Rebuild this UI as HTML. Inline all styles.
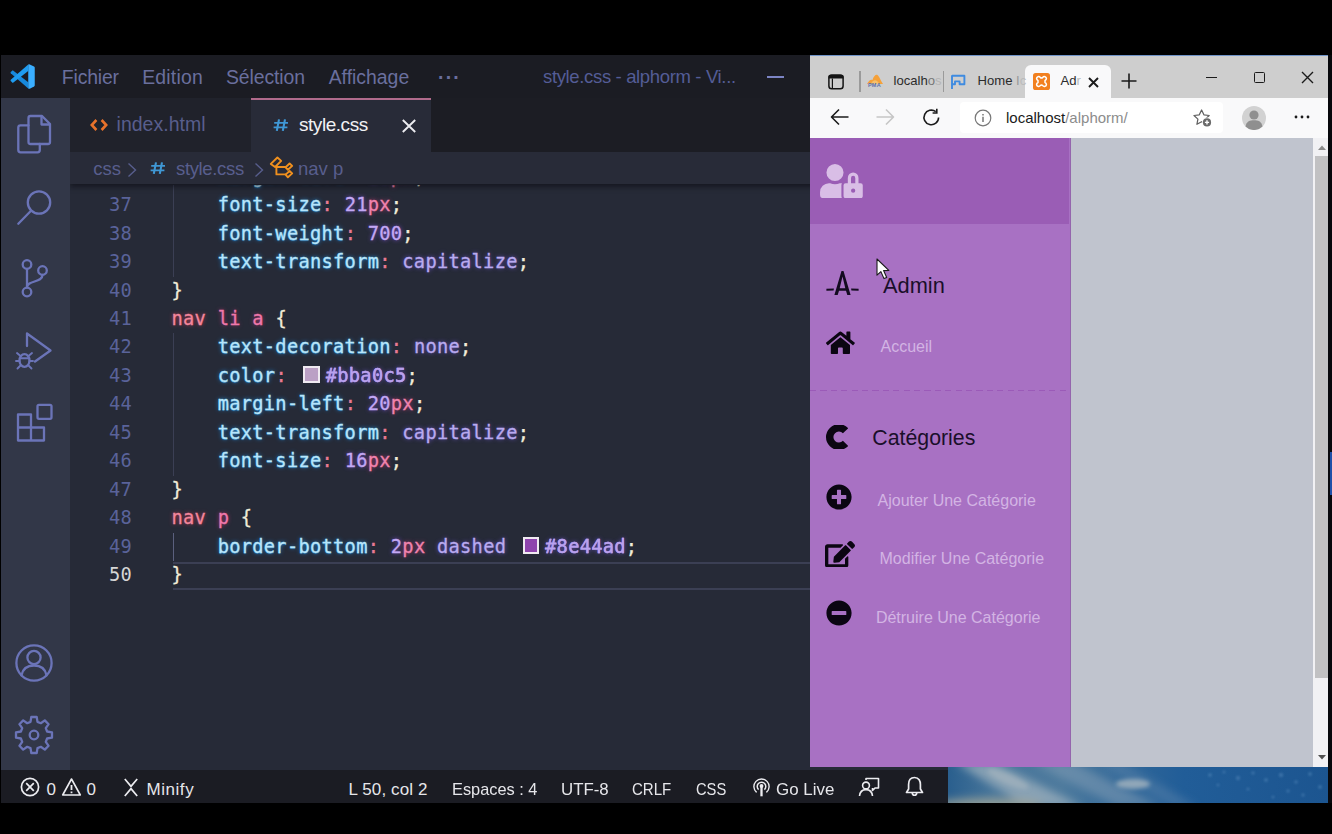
<!DOCTYPE html>
<html lang="fr">
<head>
<meta charset="utf-8">
<title>style.css - alphorm - Visual Studio Code</title>
<style>
*{box-sizing:border-box;margin:0;padding:0}
html,body{width:1332px;height:834px;overflow:hidden;background:#000}
body{position:relative;font-family:"Liberation Sans",sans-serif;}
.abs{position:absolute}
.t{position:absolute;white-space:pre;line-height:1}
/* ---------- VS Code ---------- */
#vs{position:absolute;left:1px;top:55px;width:947px;height:748px;background:#262a37;overflow:hidden}
#title{left:0;top:0;width:947px;height:43px;background:#1b1c23}
#tabs{left:69px;top:43px;width:878px;height:54px;background:#1c1d24}
#tab1{left:0;top:0;width:181px;height:54px;background:#20222b}
#tab2{left:181px;top:0;width:180px;height:54px;background:#282b38;border-top:2px solid #b06a8b}
#crumbs{left:69px;top:97px;width:878px;height:32px;background:#282b38;box-shadow:0 3px 5px rgba(10,10,16,.55);z-index:5;clip-path:inset(0 0 -12px 0)}
#act{left:0;top:43px;width:68.5px;height:672px;background:#323748}
#status{left:0;top:715px;width:947px;height:33px;background:#1b1c23;z-index:6}
.menu{color:#6a6f9e;font-size:19.4px}
.crumb{color:#585e8d;font-size:18.5px}
.st{color:#e6e6ea;font-size:17px;transform-origin:0 50%}
/* code */
#code{left:69px;top:130px;width:878px;height:585px;overflow:hidden}
.ln{position:absolute;left:0;width:62px;text-align:right;color:#5a639a;font-family:"DejaVu Sans Mono","Liberation Mono",monospace;font-size:18.7px;letter-spacing:.289px;line-height:28.45px;height:28.45px;white-space:pre}
.cl{position:absolute;left:101.5px;color:#efe9d6;-webkit-text-stroke:.3px currentColor;font-family:"DejaVu Sans Mono","Liberation Mono",monospace;font-size:18.7px;letter-spacing:.289px;line-height:28.45px;height:28.45px;white-space:pre}
.p{color:#b6e5fb;text-shadow:0 0 4px #1f86d4,0 1px 1px rgba(40,140,220,.6)}
.c{color:#e97a93}
.n{color:#c3a8f4;text-shadow:0 0 4px #7a4fd0}
.u{color:#f083ad;text-shadow:0 0 4px #b03a74}
.v{color:#b9aaf0;text-shadow:0 0 4px #6a55c8}
.s1{color:#f4869b;text-shadow:0 0 4px #b83a55}
.s2{color:#ef78ab;text-shadow:0 0 4px #a8356e}
.b{color:#f1ecd9}
.hx{color:#b9a2ee;text-shadow:0 0 4px #6a55c8;background:linear-gradient(90deg,#a99af0,#d9a0e0);-webkit-background-clip:text;background-clip:text}
.sw{display:inline-block;width:16.8px;height:16.8px;margin:0 5.7px 0 4.8px;border:2px solid #efeaf1;vertical-align:-1px}
/* ---------- Browser ---------- */
#br{position:absolute;left:810px;top:55px;width:518px;height:712px;background:#c0c4ce;overflow:hidden;z-index:10}
#strip{left:0;top:0;width:518px;height:43px;background:#cecece;border-top:1px solid #6f93c8}
#tool{left:0;top:43px;width:518px;height:40px;background:#f9f9fa}
#atab{left:215px;top:9px;width:86px;height:34px;background:#f9f9fa;border-radius:6px 6px 0 0}
#addr{left:150px;top:47px;width:263px;height:31px;background:#fff;border-radius:4px}
#side{left:0;top:83px;width:260.5px;height:629px;background:#a871c3;border-right:1.5px solid #9465ad}
#shead{left:0;top:0;width:259px;height:85.5px;background:#9a5db5}
.h{color:#1a0f2a;font-size:21px}
.a{color:#d3b4e4;font-size:16px}
.bt{color:#2b2b2b;font-size:13.1px}
</style>
</head>
<body>

<!-- ================= VS CODE ================= -->
<div id="vs">
  <div id="title" class="abs">
    <svg class="abs" style="left:9px;top:9px" width="25" height="25" viewBox="0 0 100 100">
      <path d="M11 24.5 L3 32 Q1 34.5 3 37 L73 98 V72.5 Z" fill="#1789dc"/>
      <path d="M11 75.5 L3 68 Q1 65.500 3 63 L73 2 V27.500 Z" fill="#1f9cf0"/>
      <path d="M73 2 Q76 0 79 1.500 L96 10 Q99 11.500 99 15 V85 Q99 88.500 96 90 L79 98.500 Q76 100 73 98 Z" fill="#3aaeff"/>
    </svg>
    <span class="t menu" style="left:60.8px;top:13px;letter-spacing:-.15px">Fichier</span>
    <span class="t menu" style="left:141.2px;top:13px;letter-spacing:.2px">Edition</span>
    <span class="t menu" style="left:225px;top:13px;letter-spacing:-.1px">Sélection</span>
    <span class="t menu" style="left:327.7px;top:13px">Affichage</span>
    <span class="t menu" style="left:437px;top:12.6px;letter-spacing:1.2px;font-weight:bold">···</span>
    <span class="t menu" style="left:542px;top:13px;font-size:18.5px;letter-spacing:-.35px;color:#545c96">style.css - alphorm - Vi...</span>
    <div class="abs" style="left:766px;top:21px;width:17px;height:2px;background:#7c84c4"></div>
  </div>
  <div id="act" class="abs">
    <svg class="abs" style="left:0;top:0" width="69" height="672" viewBox="1 98 69 672" fill="none" stroke="#6b74b8" stroke-width="2.3" stroke-linejoin="round" stroke-linecap="round">
      <!-- files -->
      <path d="M30.5 116 H42 L50 124 V142 a2 2 0 0 1 -2 2 H30.5 a2 2 0 0 1 -2 -2 V118 a2 2 0 0 1 2 -2 Z"/>
      <path d="M41.5 116.5 V124.5 H49.5"/>
      <path d="M28.5 125.3 H20.5 a2.2 2.2 0 0 0 -2.2 2.2 V150.1 a2.2 2.2 0 0 0 2.2 2.2 H37.6 a2.2 2.2 0 0 0 2.2 -2.2 V144"/>
      <!-- search -->
      <circle cx="39" cy="202.5" r="11.2"/>
      <path d="M31 210.8 L18.3 223.8"/>
      <!-- scm -->
      <circle cx="27" cy="264.5" r="4.3"/><circle cx="42.5" cy="270.5" r="4.3"/><circle cx="27" cy="292" r="4.3"/>
      <path d="M27 269 V287.5 M42.5 275 C42.5 283 27 280 27 287.5"/>
      <!-- debug -->
      <path d="M27 346 V333.5 L50.5 350.5 L35 361.5"/>
      <ellipse cx="24.5" cy="360.5" rx="5" ry="6.3"/>
      <path d="M20.5 356 L17 353 M28.5 356 L32 353 M19.5 361 H16 M29.5 361 H33 M20.5 365.5 L17.5 368.5 M28.5 365.5 L31.5 368.5 M20.5 358.3 H28.5" stroke-width="1.9"/>
      <!-- extensions -->
      <path d="M18 414.5 H31 V427.5 H44 V440.5 H18 Z M31 427.5 V440.5 M18 427.5 H31"/>
      <rect x="37.5" y="404.8" width="14" height="14" rx="1.5"/>
      <!-- account -->
      <circle cx="34" cy="663" r="17.6"/>
      <circle cx="34" cy="657.5" r="6.6"/>
      <path d="M21.5 675.3 C23 667.5 29 665.5 34 665.5 C39 665.5 45 667.5 46.5 675.3"/>
      <!-- gear -->
      <path d="M30.5 721.9 L31.3 717.0 L36.7 717.0 L37.5 721.9 L40.8 723.2 L44.8 720.4 L48.6 724.2 L45.8 728.2 L47.1 731.5 L52.0 732.3 L52.0 737.7 L47.1 738.5 L45.8 741.8 L48.6 745.8 L44.8 749.6 L40.8 746.8 L37.5 748.1 L36.7 753.0 L31.3 753.0 L30.5 748.1 L27.2 746.8 L23.2 749.6 L19.4 745.8 L22.2 741.8 L20.9 738.5 L16.0 737.7 L16.0 732.3 L20.9 731.5 L22.2 728.2 L19.4 724.2 L23.2 720.4 L27.2 723.2 Z"/>
      <circle cx="34" cy="735" r="4.3"/>
    </svg>
  </div>
  <div id="tabs" class="abs">
    <div id="tab1" class="abs">
      <svg class="abs" style="left:19px;top:19px" width="20" height="16" viewBox="0 0 20 16" fill="none" stroke="#e9722b" stroke-width="2.6"><path d="M7.4 3 L2.8 8 L7.4 13 M12.6 3 L17.2 8 L12.600 13"/></svg>
      <span class="t" style="left:46.6px;top:17.3px;font-size:19.5px;color:#585e8d">index.html</span>
    </div>
    <div id="tab2" class="abs">
      <svg class="abs" style="left:21.5px;top:18.5px" width="16" height="12.3" viewBox="0 0 16 14" preserveAspectRatio="none" fill="none" stroke="#3f97d4" stroke-width="2.1"><path d="M6 0.5 L3.8 13.5 M12 0.5 L9.8 13.5 M1.2 4.5 H15 M0.6 9.5 H14.4"/></svg>
      <span class="t" style="left:48px;top:15.2px;font-size:19px;letter-spacing:-.46px;color:#f2f2f4">style.css</span>
      <svg class="abs" style="left:150px;top:18.5px" width="16" height="14" viewBox="0 0 16 14" fill="none" stroke="#ececf0" stroke-width="1.9"><path d="M1.8 1 L14.2 13 M14.2 1 L1.8 13"/></svg>
    </div>
  </div>
  <div id="code" class="abs">
    <div class="abs" style="left:102.5px;top:376.99px;width:800px;height:28px;border-top:2px solid #3b3f54;border-bottom:2px solid #3b3f54"></div>
    <div class="abs" style="left:102.6px;top:-22.21px;width:1px;height:113.80px;background:#3b3f54"></div>
    <div class="abs" style="left:102.6px;top:148.49px;width:1px;height:142.25px;background:#3b3f54"></div>
    <div class="abs" style="left:102.6px;top:347.64px;width:1px;height:28.45px;background:#5b607e"></div>
    <div class="ln" style="top:-22.21px">36</div><div class="cl" style="top:-22.21px">    <span class="p">margin-left</span><span class="c">:</span> <span class="n">10</span><span class="u">px</span><span class="b">;</span></div>
    <div class="ln" style="top:6.24px">37</div><div class="cl" style="top:6.24px">    <span class="p">font-size</span><span class="c">:</span> <span class="n">21</span><span class="u">px</span><span class="b">;</span></div>
    <div class="ln" style="top:34.69px">38</div><div class="cl" style="top:34.69px">    <span class="p">font-weight</span><span class="c">:</span> <span class="n">700</span><span class="b">;</span></div>
    <div class="ln" style="top:63.14px">39</div><div class="cl" style="top:63.14px">    <span class="p">text-transform</span><span class="c">:</span> <span class="v">capitalize</span><span class="b">;</span></div>
    <div class="ln" style="top:91.59px">40</div><div class="cl" style="top:91.59px"><span class="b">}</span></div>
    <div class="ln" style="top:120.04px">41</div><div class="cl" style="top:120.04px"><span class="s1">nav</span> <span class="s2">li</span> <span class="s2">a</span> <span class="b">{</span></div>
    <div class="ln" style="top:148.49px">42</div><div class="cl" style="top:148.49px">    <span class="p">text-decoration</span><span class="c">:</span> <span class="v">none</span><span class="b">;</span></div>
    <div class="ln" style="top:176.94px">43</div><div class="cl" style="top:176.94px">    <span class="p">color</span><span class="c">:</span> <span class="sw" style="background:#bba0c5"></span><span class="hx">#bba0c5</span><span class="b">;</span></div>
    <div class="ln" style="top:205.39px">44</div><div class="cl" style="top:205.39px">    <span class="p">margin-left</span><span class="c">:</span> <span class="n">20</span><span class="u">px</span><span class="b">;</span></div>
    <div class="ln" style="top:233.84px">45</div><div class="cl" style="top:233.84px">    <span class="p">text-transform</span><span class="c">:</span> <span class="v">capitalize</span><span class="b">;</span></div>
    <div class="ln" style="top:262.29px">46</div><div class="cl" style="top:262.29px">    <span class="p">font-size</span><span class="c">:</span> <span class="n">16</span><span class="u">px</span><span class="b">;</span></div>
    <div class="ln" style="top:290.74px">47</div><div class="cl" style="top:290.74px"><span class="b">}</span></div>
    <div class="ln" style="top:319.19px">48</div><div class="cl" style="top:319.19px"><span class="s1">nav</span> <span class="s2">p</span> <span class="b">{</span></div>
    <div class="ln" style="top:347.64px">49</div><div class="cl" style="top:347.64px">    <span class="p">border-bottom</span><span class="c">:</span> <span class="n">2</span><span class="u">px</span> <span class="v">dashed</span> <span class="sw" style="background:#8e44ad"></span><span class="hx">#8e44ad</span><span class="b">;</span></div>
    <div class="ln" style="top:376.09px;color:#d6d6d6">50</div><div class="cl" style="top:376.09px"><span class="b">}</span></div>
  </div>
  <div id="crumbs" class="abs">
    <span class="t crumb" style="left:23.3px;top:7.9px">css</span>
    <svg class="abs" style="left:56px;top:9px" width="12" height="18" viewBox="0 0 12 18" fill="none" stroke="#585e8d" stroke-width="1.4"><path d="M2.5 2.5 L9.5 9 L2.5 15.5"/></svg>
    <svg class="abs" style="left:79.5px;top:9.5px" width="16" height="12.3" viewBox="0 0 16 14" preserveAspectRatio="none" fill="none" stroke="#3f97d4" stroke-width="2.1"><path d="M6 0.5 L3.8 13.5 M12 0.5 L9.8 13.5 M1.2 4.5 H15 M0.6 9.5 H14.4"/></svg>
    <span class="t crumb" style="left:106px;top:7.9px;letter-spacing:-.35px">style.css</span>
    <svg class="abs" style="left:183px;top:9px" width="12" height="18" viewBox="0 0 12 18" fill="none" stroke="#585e8d" stroke-width="1.4"><path d="M2.5 2.5 L9.5 9 L2.5 15.5"/></svg>
    <svg class="abs" style="left:199px;top:4px" width="26" height="24" viewBox="0 0 26 24" fill="none" stroke="#f0901e" stroke-width="1.9" stroke-linejoin="round">
      <path d="M1.8 7.900 L8.400 1.500 L12.200 4.900 L6.100 11 Z"/>
      <path d="M16.600 11.300 L20.600 7.500 L23.200 9.900 L18.900 13.800 Z"/>
      <path d="M16.600 18.600 L20.600 15 L23.200 17.400 L18.900 21.300 Z"/>
      <path d="M7.400 10 V18.400 H17 M7.400 11 H17"/>
    </svg>
    <span class="t crumb" style="left:228px;top:7.9px">nav p</span>
  </div>
  <div id="status" class="abs">
    <svg class="abs" style="left:19px;top:7px" width="20" height="20" viewBox="0 0 20 20" fill="none" stroke="#ececf0" stroke-width="1.7"><circle cx="10" cy="10" r="8.6"/><path d="M6.2 6.2 L13.8 13.8 M13.8 6.2 L6.2 13.8"/></svg>
    <span class="t st" style="left:45.5px;top:10.7px">0</span>
    <svg class="abs" style="left:60px;top:7px" width="21" height="20" viewBox="0 0 21 20" fill="none" stroke="#ececf0" stroke-width="1.6" stroke-linejoin="round"><path d="M10.5 2 L19.3 18 H1.7 Z"/><path d="M10.5 8 V13 M10.5 14.6 V16.2" stroke-width="1.8"/></svg>
    <span class="t st" style="left:85.5px;top:10.7px">0</span>
    <svg class="abs" style="left:122px;top:8px" width="16" height="19" viewBox="0 0 16 19" fill="none" stroke="#ececf0" stroke-width="1.7"><path d="M1.8 1 L8 8.4 L14.2 1 M1.8 18 L8 10.6 L14.2 18"/></svg>
    <span class="t st" style="left:145.5px;top:10.7px;letter-spacing:.55px">Minify</span>
    <span class="t st" style="left:347.5px;top:10.7px;letter-spacing:.12px">L 50, col 2</span>
    <span class="t st" style="left:450.5px;top:10.7px;transform:scaleX(.962)">Espaces : 4</span>
    <span class="t st" style="left:559.8px;top:10.7px;transform:scaleX(.99)">UTF-8</span>
    <span class="t st" style="left:631.3px;top:10.7px;transform:scaleX(.885)">CRLF</span>
    <span class="t st" style="left:694.5px;top:10.7px;transform:scaleX(.865)">CSS</span>
    <svg class="abs" style="left:750.5px;top:7px" width="19" height="20" viewBox="0 0 19 20" fill="none" stroke="#ececf0" stroke-width="1.5"><circle cx="9.5" cy="9" r="1.9" fill="#ececf0" stroke="none"/><path d="M6.6 12.6 A4.3 4.3 0 1 1 12.4 12.6"/><path d="M4.6 15.400 A7.600 7.600 0 1 1 14.400 15.400" stroke-width="1.4"/><path d="M9.500 10 V19.300" stroke-width="2.300"/></svg>
    <span class="t st" style="left:774.5px;top:10.7px;transform:scaleX(.995)">Go Live</span>
    <svg class="abs" style="left:857px;top:7px" width="22" height="20" viewBox="0 0 22 20" fill="none" stroke="#ececf0" stroke-width="1.6" stroke-linejoin="round"><path d="M8 3 V1.5 H20.5 V11 H17 L14.5 13.5 V11"/><circle cx="8" cy="8.5" r="3.4"/><path d="M1.5 19 C2 14 5 12.6 8 12.6 C11 12.6 14 14 14.5 19"/></svg>
    <svg class="abs" style="left:904px;top:6px" width="19" height="22" viewBox="0 0 19 22" fill="none" stroke="#ececf0" stroke-width="1.7" stroke-linejoin="round"><path d="M9.5 1.5 C5 1.5 3.6 5 3.6 8.5 V13 L1.5 16.5 H17.5 L15.4 13 V8.5 C15.4 5 14 1.5 9.5 1.5 Z"/><path d="M7.3 17 C7.3 20 11.7 20 11.7 17"/></svg>
  </div>
</div>

<!-- ================= BROWSER ================= -->
<div id="br">
  <div id="strip" class="abs"><div id="atab" class="abs"></div>
    <!-- tab actions icon -->
    <svg class="abs" style="left:17.5px;top:18px" width="16" height="16" viewBox="0 0 16 16" fill="none" stroke="#141414" stroke-width="1.5"><rect x="0.9" y="0.9" width="14.2" height="13.8" rx="2.8"/><path d="M1.5 0.9 H14.5 a1.5 1.5 0 0 1 1 1.5 V4.6 H0.5 V2.4 a1.5 1.5 0 0 1 1 -1.5 Z" fill="#141414" stroke="none"/><path d="M4.4 4.6 V14.5" stroke-width="1.2"/></svg>
    <div class="abs" style="left:49px;top:15px;width:1.5px;height:21px;background:#9a9a9a"></div>
    <!-- pma icon -->
    <svg class="abs" style="left:56px;top:17px" width="18" height="17" viewBox="0 0 18 17"><path d="M1 11 C3 7 5 6 6.5 7 C7.5 3 10 1 11.5 2 C13 3 14 6 17 11 Z" fill="#f5a13a"/><path d="M5 11 C6 8 9 6 11 8 C12 9 13 10 14 11 Z" fill="#f7c06a"/></svg>
    <span class="t" style="left:58px;top:27px;font-size:5.5px;font-weight:bold;color:#5b6fa8;letter-spacing:.2px">PMA</span>
    <span class="t bt" style="left:83.5px;top:18.2px">localh<span style="color:#777">o</span><span style="color:#b5b5b5">s</span></span>
    <div class="abs" style="left:132.5px;top:15px;width:1.5px;height:21px;background:#9a9a9a"></div>
    <!-- flag icon -->
    <svg class="abs" style="left:140px;top:18px" width="17" height="16" viewBox="0 0 17 16" fill="none" stroke="#3f8be0" stroke-width="1.9" stroke-linejoin="round"><path d="M2 15 V1.2"/><path d="M2 1.8 H14.4 V10.2 H9.6 V7.4 H5 V10.2 H2" /></svg>
    <span class="t bt" style="left:167.5px;top:18.2px">Home <span style="color:#999">I</span><span style="color:#bbb">c</span></span>
    <!-- xampp icon -->
    <svg class="abs" style="left:223px;top:17px" width="17" height="17" viewBox="0 0 17 17"><rect x="0" y="0" width="17" height="17" rx="2.6" fill="#f2801f"/><path d="M3.6 5.6 a2 2 0 0 1 3.6 -1.2 q1.3 1.2 2.6 0 a2 2 0 0 1 3.6 1.2 q-0.2 1.4 -1.4 1.9 v2 q1.2 0.5 1.4 1.9 a2 2 0 0 1 -3.6 1.2 q-1.3 -1.2 -2.6 0 a2 2 0 0 1 -3.6 -1.2 q0.2 -1.4 1.4 -1.9 v-2 q-1.2 -0.5 -1.4 -1.9 Z" fill="none" stroke="#fff" stroke-width="1.5" stroke-linejoin="round"/></svg>
    <span class="t bt" style="left:250.5px;top:18.2px">Ad<span style="color:#bbb">r</span></span>
    <svg class="abs" style="left:278px;top:21px" width="11" height="11" viewBox="0 0 11 11" fill="none" stroke="#1b1b1b" stroke-width="1.9"><path d="M1 1 L10 10 M10 1 L1 10"/></svg>
    <svg class="abs" style="left:311px;top:17px" width="16" height="16" viewBox="0 0 16 16" fill="none" stroke="#1b1b1b" stroke-width="1.6"><path d="M8 0.5 V15.5 M0.5 8 H15.5"/></svg>
    <div class="abs" style="left:396px;top:20.5px;width:11px;height:1.5px;background:#1b1b1b"></div>
    <div class="abs" style="left:444px;top:15.5px;width:11px;height:11px;border:1.5px solid #1b1b1b;border-radius:1.5px"></div>
    <svg class="abs" style="left:491px;top:15px" width="13" height="13" viewBox="0 0 13 13" fill="none" stroke="#1b1b1b" stroke-width="1.4"><path d="M1 1 L12 12 M12 1 L1 12"/></svg>
  </div>
  <div id="tool" class="abs"></div>
  <div id="addr" class="abs"></div>
  <div class="abs" style="left:0;top:43px;width:518px;height:40px">
    <!-- back -->
    <svg class="abs" style="left:20px;top:10px" width="19" height="18" viewBox="0 0 19 18" fill="none" stroke="#1b1b1b" stroke-width="1.6" stroke-linejoin="round"><path d="M18.5 9 H1.8 M9 1.5 L1.5 9 L9 16.5"/></svg>
    <!-- forward -->
    <svg class="abs" style="left:66px;top:10px" width="19" height="18" viewBox="0 0 19 18" fill="none" stroke="#c6c6c6" stroke-width="1.6" stroke-linejoin="round"><path d="M0.5 9 H17.2 M10 1.5 L17.5 9 L10 16.5"/></svg>
    <!-- reload -->
    <svg class="abs" style="left:112px;top:10px" width="19" height="19" viewBox="0 0 19 19" fill="none" stroke="#1b1b1b" stroke-width="1.6"><path d="M16.6 9.5 A7.3 7.3 0 1 1 13.8 3.7"/><path d="M14.8 0.8 V5 H10.6"/></svg>
    <!-- info -->
    <svg class="abs" style="left:164px;top:10.5px" width="18" height="18" viewBox="0 0 18 18" fill="none" stroke="#777" stroke-width="1.2"><circle cx="9" cy="9" r="7.8"/><path d="M9 7.8 V13 M9 5 V6.4" stroke-width="1.5"/></svg>
    <span class="t" style="left:196px;top:11.5px;font-size:15px;color:#1b1b1b">localhost<span style="color:#8c8c8c">/alphorm/</span></span>
    <!-- star+ -->
    <svg class="abs" style="left:383px;top:10.5px" width="20" height="19" viewBox="0 0 20 19" fill="none" stroke="#606060" stroke-width="1.25" stroke-linejoin="round"><path d="M8.6 1 L10.9 5.8 L16.2 6.5 L12.3 10.1 L13.3 15.3 L8.6 12.7 L3.9 15.3 L4.9 10.1 L1 6.5 L6.3 5.8 Z"/><circle cx="14" cy="13.4" r="4.9" fill="#fff" stroke="none"/><circle cx="14" cy="13.4" r="4.1" fill="#6a6a6a" stroke="none"/><path d="M14 11.3 V15.5 M11.9 13.4 H16.1" stroke="#fff" stroke-width="1.4"/></svg>
    <!-- profile -->
    <svg class="abs" style="left:432px;top:7.5px" width="24" height="24" viewBox="0 0 24 24"><circle cx="12" cy="12" r="12" fill="#d2d2d2"/><circle cx="12" cy="9" r="4.6" fill="#8f8f8f"/><path d="M3.5 20.5 C4.5 15 8 14.2 12 14.2 C16 14.2 19.5 15 20.5 20.5 A12 12 0 0 1 3.5 20.5 Z" fill="#8f8f8f"/></svg>
    <svg class="abs" style="left:484px;top:17px" width="16" height="4" viewBox="0 0 16 4" fill="#1b1b1b"><circle cx="2" cy="2" r="1.4"/><circle cx="8" cy="2" r="1.4"/><circle cx="14" cy="2" r="1.4"/></svg>
  </div>
  <div id="side" class="abs"><div id="shead" class="abs"></div>
    <!-- user-lock -->
    <svg class="abs" style="left:10px;top:25.5px" width="42.8" height="34.2" viewBox="0 0 640 512" fill="#d9bee6"><path d="M224 256A128 128 0 1 0 96 128a128 128 0 0 0 128 128zm96 64a63.080 63.080 0 0 1 8.100-30.500c-4.800-.500-9.500-1.500-14.500-1.500h-16.700a174.080 174.080 0 0 1-145.800 0h-16.700A134.430 134.430 0 0 0 0 422.400V464a48 48 0 0 0 48 48h280.900a63.540 63.540 0 0 1-8.900-32zm288-32h-32v-80a80 80 0 0 0-160 0v80h-32a32 32 0 0 0-32 32v160a32 32 0 0 0 32 32h224a32 32 0 0 0 32-32V320a32 32 0 0 0-32-32zM496 432a32 32 0 1 1 32-32 32 32 0 0 1-32 32zm32-144h-64v-80a32 32 0 0 1 64 0z"/></svg>
    <!-- autoprefixer -->
    <svg class="abs" style="left:15.7px;top:133.4px" width="33" height="24" viewBox="0 0 33 24" fill="#140b20"><path d="M15.5 0 H17.5 L24.6 24 H21.3 L20 19.7 H13 L11.7 24 H8.4 Z M16.5 5.6 L13.7 17.3 H19.3 Z"/><path d="M0.4 17.7 L7.9 17.4 L7.6 19.6 L0.4 19.8 Z M32.6 17.7 L25.1 17.4 L25.4 19.6 L32.6 19.8 Z"/></svg>
    <span class="t h" style="left:73px;top:136.6px;font-size:21.8px">Admin</span>
    <!-- home -->
    <svg class="abs" style="left:16px;top:191.7px" width="28.8" height="25.6" viewBox="0 0 576 512" fill="#0b0612"><path d="M280.37 148.26L96 300.11V464a16 16 0 0 0 16 16l112.06-.29a16 16 0 0 0 15.920-16V368a16 16 0 0 1 16-16h64a16 16 0 0 1 16 16v95.640a16 16 0 0 0 16 16.050L464 480a16 16 0 0 0 16-16V300L295.670 148.260a12.190 12.190 0 0 0-15.300 0zM571.600 251.470L488 182.560V44.050a12 12 0 0 0-12-12h-56a12 12 0 0 0-12 12v72.610L318.470 43a48 48 0 0 0-61 0L4.340 251.470a12 12 0 0 0-1.600 16.900l25.500 31A12 12 0 0 0 45.150 301l235.220-193.740a12.190 12.190 0 0 1 15.300 0L530.900 301a12 12 0 0 0 16.900-1.600l25.500-31a12 12 0 0 0-1.700-16.930z"/></svg>
    <span class="t a" style="left:70.5px;top:201.3px">Accueil</span>
    <div class="abs" style="left:0;top:251.6px;width:260px;height:1.8px;background:repeating-linear-gradient(90deg,rgba(142,68,173,.5) 0,rgba(142,68,173,.5) 6.2px,transparent 6.2px,transparent 10.4px)"></div>
    <!-- cuttlefish C -->
    <svg class="abs" style="left:15.4px;top:286.9px" width="22.6" height="24.2" viewBox="0 0 22.6 24.2" fill="none" stroke="#0b0612" stroke-width="7.4"><path d="M20.6 5.8 A9.2 9.2 0 1 0 20.6 18.4"/></svg>
    <span class="t h" style="left:62.3px;top:290.4px;font-size:21.3px">Catégories</span>
    <!-- plus-circle -->
    <svg class="abs" style="left:15.8px;top:345.5px" width="26" height="26" viewBox="0 0 512 512" fill="#0b0612"><path d="M256 8C119 8 8 119 8 256s111 248 248 248 248-111 248-248S393 8 256 8zm144 276c0 6.600-5.400 12-12 12h-92v92c0 6.600-5.400 12-12 12h-56c-6.600 0-12-5.400-12-12v-92h-92c-6.600 0-12-5.400-12-12v-56c0-6.600 5.400-12 12-12h92v-92c0-6.600 5.400-12 12-12h56c6.600 0 12 5.400 12 12v92h92c6.600 0 12 5.400 12 12v56z"/></svg>
    <span class="t a" style="left:67.5px;top:354.8px">Ajouter Une Catégorie</span>
    <!-- edit -->
    <svg class="abs" style="left:15.4px;top:402.6px" width="30" height="26.7" viewBox="0 0 576 512" fill="#0b0612"><path d="M402.600 83.200l90.200 90.200c3.800 3.800 3.800 10 0 13.800L274.400 405.600l-92.800 10.300c-12.400 1.400-22.900-9.100-21.500-21.500l10.300-92.800L388.800 83.200c3.800-3.800 10-3.800 13.800 0zm162-22.900l-48.800-48.800c-15.200-15.200-39.900-15.200-55.200 0l-35.400 35.400c-3.800 3.800-3.800 10 0 13.800l90.200 90.200c3.800 3.800 10 3.800 13.800 0l35.400-35.400c15.200-15.300 15.200-40 0-55.200zM384 346.200V448H64V128h229.800c3.200 0 6.200-1.300 8.500-3.500l40-40c7.600-7.600 2.200-20.500-8.500-20.500H48C21.500 64 0 85.500 0 112v352c0 26.500 21.500 48 48 48h352c26.500 0 48-21.500 48-48V306.200c0-10.700-12.900-16-20.500-8.500l-40 40c-2.200 2.300-3.500 5.300-3.500 8.500z"/></svg>
    <span class="t a" style="left:69.5px;top:413.1px">Modifier Une Catégorie</span>
    <!-- minus-circle -->
    <svg class="abs" style="left:15.8px;top:462px" width="26" height="26" viewBox="0 0 512 512" fill="#0b0612"><path d="M256 8C119 8 8 119 8 256s111 248 248 248 248-111 248-248S393 8 256 8zM124 296c-6.600 0-12-5.400-12-12v-56c0-6.600 5.400-12 12-12h264c6.600 0 12 5.400 12 12v56c0 6.600-5.400 12-12 12H124z"/></svg>
    <span class="t a" style="left:65.9px;top:471.5px">Détruire Une Catégorie</span>
    <!-- mouse cursor -->
    <svg class="abs" style="left:66px;top:120px" width="15" height="22" viewBox="0 0 15 22"><path d="M1 1 V17.2 L4.9 13.6 L8 20.6 L10.7 19.4 L7.6 12.6 L12.8 12.4 Z" fill="#fff" stroke="#1a1a1a" stroke-width="1.1" stroke-linejoin="round"/></svg>
  </div>
  <!-- scrollbar -->
  <div class="abs" style="left:503px;top:83px;width:15px;height:629px;background:#f1f1f4"></div>
  <div class="abs" style="left:505px;top:101px;width:13px;height:522px;background:#c1c1c3"></div>
  <svg class="abs" style="left:508px;top:90px" width="8" height="5" viewBox="0 0 8 5"><path d="M0 5 L4 0.6 L8 5 Z" fill="#8a8a8a"/></svg>
  <svg class="abs" style="left:508px;top:700px" width="8" height="5" viewBox="0 0 8 5"><path d="M0 0 L4 4.4 L8 0 Z" fill="#505050"/></svg>
</div>

<!-- desktop strip -->
<svg class="abs" style="left:948px;top:767px;z-index:8" width="380" height="36" viewBox="0 0 380 36">
  <defs>
    <linearGradient id="dg" x1="0" x2="1" y1="0" y2="0"><stop offset="0" stop-color="#2a5f8e"/><stop offset=".12" stop-color="#47759a"/><stop offset=".3" stop-color="#4d7a9d"/><stop offset=".48" stop-color="#2f6698"/><stop offset=".62" stop-color="#215d98"/><stop offset="1" stop-color="#1c5590"/></linearGradient>
    <filter id="b4" x="-20%" y="-50%" width="140%" height="200%"><feGaussianBlur stdDeviation="4"/></filter>
    <filter id="b2" x="-20%" y="-50%" width="140%" height="200%"><feGaussianBlur stdDeviation="2"/></filter>
    <filter id="b1"><feGaussianBlur stdDeviation="0.9"/></filter>
  </defs>
  <rect width="380" height="36" fill="url(#dg)"/>
  <g filter="url(#b4)">
    <polygon points="8,-4 48,-4 135,40 80,40" fill="#93a9b8" opacity=".85"/>
    <polygon points="85,-4 125,-4 215,40 170,40" fill="#7b98b2" opacity=".6"/>
    <ellipse cx="40" cy="38" rx="55" ry="7" fill="#a3a596" opacity=".8"/>
    <polygon points="150,-4 175,-4 250,40 225,40" fill="#5f86ab" opacity=".45"/>
  </g>
  <g filter="url(#b2)">
    <ellipse cx="185" cy="17" rx="17" ry="5" fill="#9fb0bd" opacity=".85"/>
    <ellipse cx="60" cy="12" rx="22" ry="5" fill="#a6b6c0" opacity=".6" transform="rotate(24 60 12)"/>
  </g>
  <g filter="url(#b1)" fill="#4f83b6" opacity=".55">
    <circle cx="262" cy="8" r="2"/><circle cx="276" cy="5" r="1.6"/><circle cx="290" cy="11" r="2.2"/><circle cx="305" cy="6" r="1.8"/><circle cx="318" cy="13" r="2"/><circle cx="333" cy="8" r="2.3"/><circle cx="348" cy="15" r="1.8"/><circle cx="362" cy="7" r="2"/><circle cx="372" cy="20" r="2"/><circle cx="340" cy="24" r="1.7"/><circle cx="300" cy="22" r="1.6"/><circle cx="270" cy="18" r="1.5"/><circle cx="355" cy="28" r="1.7"/><circle cx="325" cy="30" r="1.5"/>
  </g>
</svg>
<div class="abs" style="left:1328px;top:55px;width:4px;height:748px;background:#07080c;z-index:9"></div>
<div class="abs" style="left:1329.5px;top:452px;width:2.5px;height:43px;background:#1f4fa8;z-index:9"></div>
</body>
</html>
